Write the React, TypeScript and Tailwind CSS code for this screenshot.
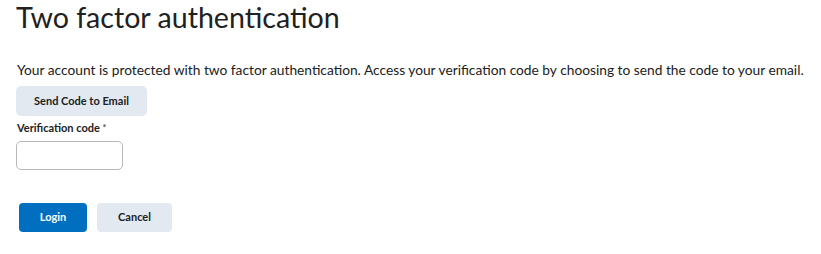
export default function App() {
  return (
    <div className="w-[821px] h-[254px] bg-white overflow-hidden pl-4 text-[#202122]" style={{ fontFamily: 'Lato, "Noto Sans", sans-serif' }}>
      <h1 className="text-[28.6px] leading-[34px] font-normal">Two factor authentication</h1>
      <p className="mt-[26px] text-[13.75px] leading-[20px] pl-px whitespace-nowrap">
        Your account is protected with two factor authentication. Access your verification code by choosing to send the code to your email.
      </p>
      <button className="mt-[6px] w-[131px] h-[30px] bg-[#e3e9f1] rounded-[5px] text-[11px] font-bold">
        Send Code to Email
      </button>
      <div className="mt-[4px] text-[11px] font-bold leading-[16px] pl-px">
        Verification code <span className="text-[#494c4e] text-[9px] align-top font-bold">*</span>
      </div>
      <input className="mt-[5px] block w-[107px] h-[29px] border border-[#b5b9bc] rounded-[5px]" />
      <div className="mt-[33px] flex gap-[10px] pl-[3px]">
        <button className="w-[68px] h-[29px] bg-[#006fbf] rounded-[4px] text-white text-[11px] font-bold">Login</button>
        <button className="w-[75px] h-[29px] bg-[#e3e9f1] rounded-[4px] text-[11px] font-bold">Cancel</button>
      </div>
    </div>
  );
}
